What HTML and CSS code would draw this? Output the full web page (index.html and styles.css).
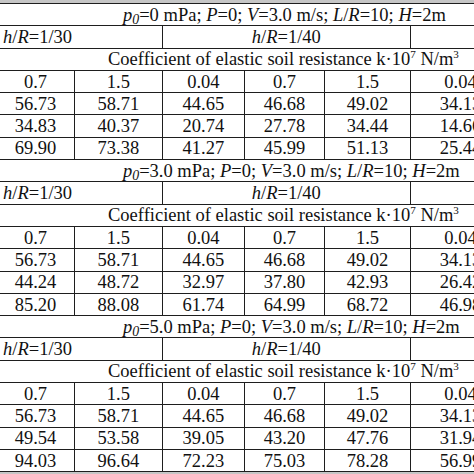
FILE: index.html
```html
<!DOCTYPE html>
<html>
<head>
<meta charset="utf-8">
<link rel="stylesheet" href="styles.css">
</head>
<body>
<div class="page">
<table class="data">
  <colgroup>
    <col class="c1"><col class="c2"><col class="c3"><col class="c4"><col class="c5"><col class="c6"><col class="c7"><col class="c8">
  </colgroup>
  <tbody>
    <tr class="title"><td colspan="8"><span class="t1"><i>p</i><sub><i>0</i></sub>=0 mPa; <i>P</i>=0; <i>V</i>=3.0 m/s; <i>L</i>/<i>R</i>=10; <i>H</i>=2m</span></td></tr>
    <tr><td colspan="2" class="left"><i>h</i>/<i>R</i>=1/30</td><td colspan="3"><i>h</i>/<i>R</i>=1/40</td><td colspan="3"><i>h</i>/<i>R</i>=1/50</td></tr>
    <tr class="title"><td colspan="8"><span class="t2">Coefficient of elastic soil resistance k·10<sup>7</sup> N/m<sup>3</sup></span></td></tr>
    <tr><td>0.7</td><td>1.5</td><td>0.04</td><td>0.7</td><td>1.5</td><td>0.04</td><td>0.7</td><td>1.5</td></tr>
    <tr><td>56.73</td><td>58.71</td><td>44.65</td><td>46.68</td><td>49.02</td><td>34.13</td><td>36.45</td><td>39.80</td></tr>
    <tr><td>34.83</td><td>40.37</td><td>20.74</td><td>27.78</td><td>34.44</td><td>14.66</td><td>21.37</td><td>28.12</td></tr>
    <tr><td>69.90</td><td>73.38</td><td>41.27</td><td>45.99</td><td>51.13</td><td>25.44</td><td>30.52</td><td>35.84</td></tr>

    <tr class="title"><td colspan="8"><span class="t1"><i>p</i><sub><i>0</i></sub>=3.0 mPa; <i>P</i>=0; <i>V</i>=3.0 m/s; <i>L</i>/<i>R</i>=10; <i>H</i>=2m</span></td></tr>
    <tr><td colspan="2" class="left"><i>h</i>/<i>R</i>=1/30</td><td colspan="3"><i>h</i>/<i>R</i>=1/40</td><td colspan="3"><i>h</i>/<i>R</i>=1/50</td></tr>
    <tr class="title"><td colspan="8"><span class="t2">Coefficient of elastic soil resistance k·10<sup>7</sup> N/m<sup>3</sup></span></td></tr>
    <tr><td>0.7</td><td>1.5</td><td>0.04</td><td>0.7</td><td>1.5</td><td>0.04</td><td>0.7</td><td>1.5</td></tr>
    <tr><td>56.73</td><td>58.71</td><td>44.65</td><td>46.68</td><td>49.02</td><td>34.13</td><td>36.45</td><td>39.80</td></tr>
    <tr><td>44.24</td><td>48.72</td><td>32.97</td><td>37.80</td><td>42.93</td><td>26.42</td><td>30.16</td><td>35.27</td></tr>
    <tr><td>85.20</td><td>88.08</td><td>61.74</td><td>64.99</td><td>68.72</td><td>46.98</td><td>50.31</td><td>54.63</td></tr>

    <tr class="title"><td colspan="8"><span class="t1"><i>p</i><sub><i>0</i></sub>=5.0 mPa; <i>P</i>=0; <i>V</i>=3.0 m/s; <i>L</i>/<i>R</i>=10; <i>H</i>=2m</span></td></tr>
    <tr><td colspan="2" class="left"><i>h</i>/<i>R</i>=1/30</td><td colspan="3"><i>h</i>/<i>R</i>=1/40</td><td colspan="3"><i>h</i>/<i>R</i>=1/50</td></tr>
    <tr class="title"><td colspan="8"><span class="t2">Coefficient of elastic soil resistance k·10<sup>7</sup> N/m<sup>3</sup></span></td></tr>
    <tr><td>0.7</td><td>1.5</td><td>0.04</td><td>0.7</td><td>1.5</td><td>0.04</td><td>0.7</td><td>1.5</td></tr>
    <tr><td>56.73</td><td>58.71</td><td>44.65</td><td>46.68</td><td>49.02</td><td>34.13</td><td>36.45</td><td>39.80</td></tr>
    <tr><td>49.54</td><td>53.58</td><td>39.05</td><td>43.20</td><td>47.76</td><td>31.94</td><td>35.08</td><td>39.71</td></tr>
    <tr><td>94.03</td><td>96.64</td><td>72.23</td><td>75.03</td><td>78.28</td><td>56.99</td><td>59.87</td><td>63.45</td></tr>
  </tbody>
</table>
</div>
</body>
</html>
```

FILE: styles.css
```css
html, body {
  margin: 0;
  padding: 0;
  background: #c6c6c6;
}

.page {
  width: 474px;
  height: 474px;
  overflow: hidden;
  padding-top: 3px;
  box-sizing: border-box;
  background: #c6c6c6;
}

.data {
  border-collapse: collapse;
  table-layout: fixed;
  width: 684px;
  margin-left: -4px;
  background: #ffffff;
  font-family: "Liberation Serif", "Times New Roman", serif;
  font-size: 18.5px;
  color: #111111;
}

.c1 { width: 78px; }
.c2 { width: 87.7px; }
.c3 { width: 82.3px; }
.c4 { width: 80px; }
.c5 { width: 86px; }
.c6 { width: 100px; }
.c7 { width: 85px; }
.c8 { width: 85px; }

.data tr {
  height: 22.3px;
}

.data td {
  border: 1px solid #1e1e1e;
  padding: 0;
  text-align: center;
  vertical-align: middle;
  line-height: 20px;
  white-space: nowrap;
  overflow: hidden;
}

.data td.left {
  text-align: left;
  padding-left: 6px;
}

.title td {
  text-align: left;
}

.t1 {
  display: inline-block;
  padding-left: 126px;
}

.t2 {
  display: inline-block;
  padding-left: 111px;
}

sub {
  font-size: 0.75em;
  line-height: 0;
  vertical-align: -0.25em;
}

sup {
  font-size: 0.6em;
  line-height: 0;
  vertical-align: 0.6em;
}
```
